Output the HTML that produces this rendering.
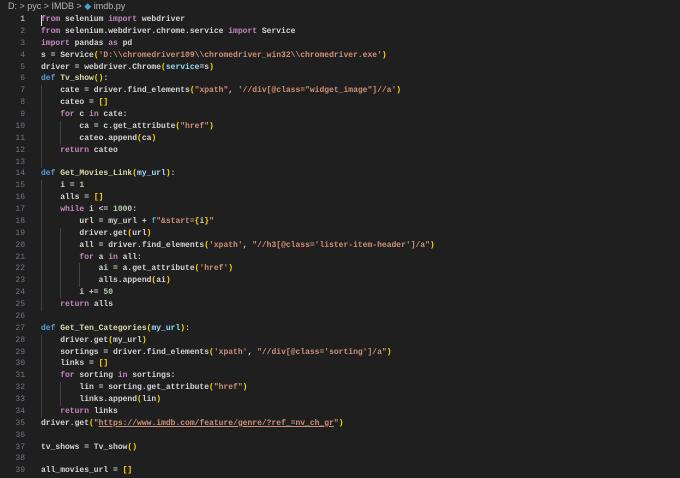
<!DOCTYPE html>
<html><head><meta charset="utf-8"><style>
html,body{margin:0;padding:0;background:#1f1f1f;width:680px;height:478px;overflow:hidden}
.bc{position:absolute;left:8px;top:1px;font:9px "Liberation Sans",sans-serif;color:#b8b8b8;}
.bc .ic{color:#4aa3d8}
.nums{position:absolute;left:0;top:14px;width:25px;text-align:right;font:8px/11.87px "Liberation Mono",monospace;color:#6e7681;margin:0;white-space:pre}
.code{position:absolute;left:41px;top:14px;font:8px/11.87px "Liberation Mono",monospace;color:#d4d4d4;margin:0;white-space:pre;font-weight:bold;letter-spacing:0}
.k{color:#c586c0}.d{color:#569cd6}.s{color:#ce9178}.f{color:#dcdcaa}.p{color:#9cdcfe}.b{color:#ffd700}.n{color:#b5cea8}.u{text-decoration:underline}
.g{position:absolute;width:1px;background:#404040}
.cur{position:absolute;left:41px;top:15px;width:1px;height:11px;background:#ddd}
</style></head><body>
<div class="bc">D: &gt; pyc &gt; IMDB &gt; <span class="ic">◆</span> imdb.py</div>
<pre class="nums"><span style="color:#e0e0e0">1</span>
2
3
4
5
6
7
8
9
10
11
12
13
14
15
16
17
18
19
20
21
22
23
24
25
26
27
28
29
30
31
32
33
34
35
36
37
38
39</pre>
<div class="g" style="left:41px;top:85px;height:83px"></div>
<div class="g" style="left:60px;top:121px;height:24px"></div>
<div class="g" style="left:41px;top:180px;height:131px"></div>
<div class="g" style="left:60px;top:228px;height:71px"></div>
<div class="g" style="left:79px;top:263px;height:24px"></div>
<div class="g" style="left:41px;top:335px;height:83px"></div>
<div class="g" style="left:60px;top:382px;height:24px"></div>
<pre class="code"><span class="k">from</span> selenium <span class="k">import</span> webdriver
<span class="k">from</span> selenium.webdriver.chrome.service <span class="k">import</span> Service
<span class="k">import</span> pandas <span class="k">as</span> pd
s = Service<span class="b">(</span><span class="s">'D:\\chromedriver109\\chromedriver_win32\\chromedriver.exe'</span><span class="b">)</span>
driver = webdriver.Chrome<span class="b">(</span><span class="p">service</span>=s<span class="b">)</span>
<span class="d">def</span> <span class="f">Tv_show</span><span class="b">()</span>:
    cate = driver.find_elements<span class="b">(</span><span class="s">"xpath"</span>, <span class="s">'//div[@class="widget_image"]//a'</span><span class="b">)</span>
    cateo = <span class="b">[]</span>
    <span class="k">for</span> c <span class="k">in</span> cate:
        ca = c.get_attribute<span class="b">(</span><span class="s">"href"</span><span class="b">)</span>
        cateo.append<span class="b">(</span>ca<span class="b">)</span>
    <span class="k">return</span> cateo

<span class="d">def</span> <span class="f">Get_Movies_Link</span><span class="b">(</span><span class="p">my_url</span><span class="b">)</span>:
    i = <span class="n">1</span>
    alls = <span class="b">[]</span>
    <span class="k">while</span> i &lt;= <span class="n">1000</span>:
        url = my_url + <span class="d">f</span><span class="s">"&amp;start=</span><span class="b">{</span>i<span class="b">}</span><span class="s">"</span>
        driver.get<span class="b">(</span>url<span class="b">)</span>
        all = driver.find_elements<span class="b">(</span><span class="s">'xpath'</span>, <span class="s">"//h3[@class='lister-item-header']/a"</span><span class="b">)</span>
        <span class="k">for</span> a <span class="k">in</span> all:
            ai = a.get_attribute<span class="b">(</span><span class="s">'href'</span><span class="b">)</span>
            alls.append<span class="b">(</span>ai<span class="b">)</span>
        i += <span class="n">50</span>
    <span class="k">return</span> alls

<span class="d">def</span> <span class="f">Get_Ten_Categories</span><span class="b">(</span><span class="p">my_url</span><span class="b">)</span>:
    driver.get<span class="b">(</span>my_url<span class="b">)</span>
    sortings = driver.find_elements<span class="b">(</span><span class="s">'xpath'</span>, <span class="s">"//div[@class='sorting']/a"</span><span class="b">)</span>
    links = <span class="b">[]</span>
    <span class="k">for</span> sorting <span class="k">in</span> sortings:
        lin = sorting.get_attribute<span class="b">(</span><span class="s">"href"</span><span class="b">)</span>
        links.append<span class="b">(</span>lin<span class="b">)</span>
    <span class="k">return</span> links
driver.get<span class="b">(</span><span class="s">"<span class="u">https://www.imdb.com/feature/genre/?ref_=nv_ch_gr</span>"</span><span class="b">)</span>

tv_shows = Tv_show<span class="b">()</span>

all_movies_url = <span class="b">[]</span></pre>
<div class="cur"></div>
</body></html>
